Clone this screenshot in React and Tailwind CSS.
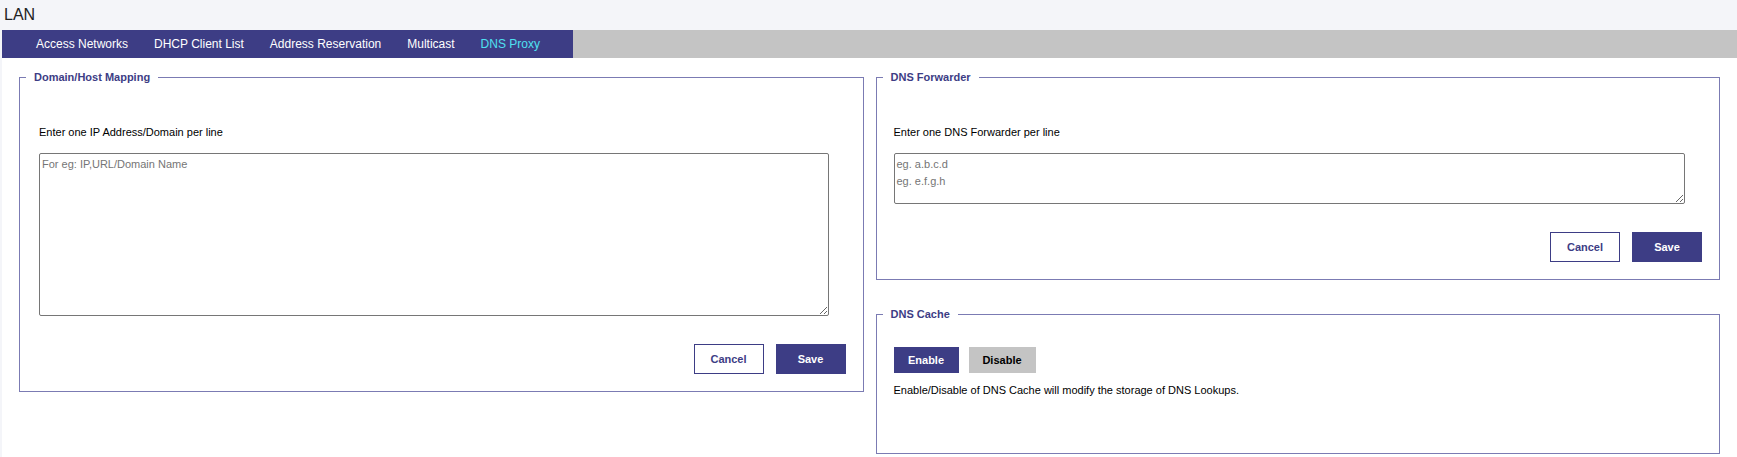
import { useState } from 'react'

const tabs = ['Access Networks', 'DHCP Client List', 'Address Reservation', 'Multicast', 'DNS Proxy']

function Panel({ title, children, className = '' }) {
  return (
    <fieldset className={`border border-[#7b7bb3] min-w-0 ${className}`}>
      <legend className="ml-[6px] px-[8px] text-[11px] leading-[13px] font-bold text-[#3d3d85]">{title}</legend>
      {children}
    </fieldset>
  )
}

function Buttons() {
  return (
    <div className="flex justify-end gap-[12px] pr-[17px]">
      <button className="w-[70px] h-[30px] border border-[#3d3d85] bg-white text-[11px] font-bold text-[#3d3d85]">
        Cancel
      </button>
      <button className="w-[70px] h-[30px] bg-[#3d3d85] text-[11px] font-bold text-white">Save</button>
    </div>
  )
}

export default function App() {
  const [active, setActive] = useState(4)
  const [cache, setCache] = useState(true)

  return (
    <div className="min-h-[457px] bg-[#f4f5f9] font-['Liberation_Sans',Arial,sans-serif] text-black">
      <div className="h-[30px] flex items-center pl-[4px] text-[16px] text-[#222]">LAN</div>

      <div className="ml-[2px] bg-white min-h-[427px]">
        {/* Tabs */}
        <div className="flex h-[28px] bg-[#c4c4c4]">
          <div className="flex items-center bg-[#3d3d85] pl-[21px] pr-[20px]">
            {tabs.map((t, i) => (
              <button
                key={t}
                onClick={() => setActive(i)}
                className={`px-[13px] text-[12px] leading-[28px] ${i === active ? 'text-[#4fe0f0]' : 'text-white'}`}
              >
                {t}
              </button>
            ))}
          </div>
        </div>

        <div className="grid grid-cols-2 gap-[12px] px-[17px] pt-[13px]">
          <Panel title="Domain/Host Mapping" className="self-start">
            <div className="pl-[19px] pt-[42px] pb-[17px]">
              <p className="text-[11px] leading-[13px]">Enter one IP Address/Domain per line</p>
              <div className="pr-[34px] mt-[14px]">
                <textarea
                  placeholder="For eg: IP,URL/Domain Name"
                  className="block w-full h-[163px] border border-[#767676] rounded-[2px] px-[2px] py-[2px] text-[11px] leading-[17px] font-['Liberation_Sans',Arial,sans-serif] placeholder:text-[#757575] outline-none"
                />
              </div>
              <div className="mt-[28px]">
                <Buttons />
              </div>
            </div>
          </Panel>

          <div className="flex flex-col">
            <Panel title="DNS Forwarder">
              <div className="pl-[17px] pt-[42px] pb-[17px]">
                <p className="text-[11px] leading-[13px]">Enter one DNS Forwarder per line</p>
                <div className="pr-[34px] mt-[14px]">
                  <textarea
                    placeholder={'eg. a.b.c.d\neg. e.f.g.h'}
                    className="block w-full h-[51px] border border-[#767676] rounded-[2px] px-[2px] py-[2px] text-[11px] leading-[17px] font-['Liberation_Sans',Arial,sans-serif] placeholder:text-[#757575] outline-none"
                  />
                </div>
                <div className="mt-[28px]">
                  <Buttons />
                </div>
              </div>
            </Panel>

            <Panel title="DNS Cache" className="mt-[28px]">
              <div className="pl-[17px] pt-[26px] pb-[56px]">
                <div className="flex gap-[10px]">
                  <button
                    onClick={() => setCache(true)}
                    className="w-[65px] h-[26px] bg-[#3d3d85] text-white text-[11px] font-bold"
                  >
                    Enable
                  </button>
                  <button
                    onClick={() => setCache(false)}
                    className="w-[67px] h-[26px] bg-[#c4c4c4] text-black text-[11px] font-bold"
                  >
                    Disable
                  </button>
                </div>
                <p className="mt-[11px] text-[11px] leading-[13px]">
                  Enable/Disable of DNS Cache will modify the storage of DNS Lookups.
                </p>
              </div>
            </Panel>
          </div>
        </div>
      </div>
    </div>
  )
}
